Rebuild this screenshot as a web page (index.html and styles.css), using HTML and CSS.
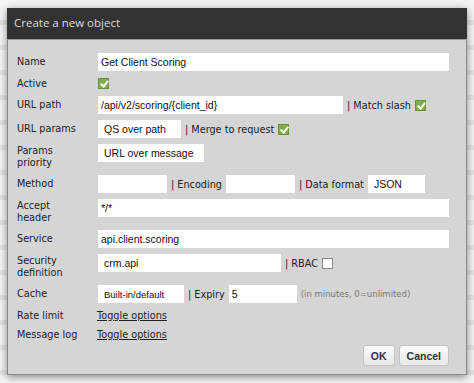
FILE: index.html
```html
<!DOCTYPE html>
<html lang="en">
<head>
    <meta charset="UTF-8">
    <title>Create a new object</title>
    <link rel="stylesheet" href="styles.css">
</head>
<body>
    <div class="dialog">
        <div class="titlebar">Create a new object</div>
        <div class="dialog-body">
            <div class="row">
                <div class="label">Name</div>
                <div class="field"><input class="txt w-full" type="text" value="Get Client Scoring"></div>
            </div>
            <div class="row row-short">
                <div class="label">Active</div>
                <div class="field"><span class="cb checked"></span></div>
            </div>
            <div class="row">
                <div class="label">URL path</div>
                <div class="field">
                    <input class="txt w-path" type="text" value="/api/v2/scoring/{client_id}">
                    <span class="sep">| Match slash</span><span class="cb checked"></span>
                </div>
            </div>
            <div class="row">
                <div class="label">URL params</div>
                <div class="field">
                    <input class="txt w-qs pad5" type="text" value="QS over path">
                    <span class="sep">| Merge to request</span><span class="cb checked"></span>
                </div>
            </div>
            <div class="row">
                <div class="label two">Params<br>priority</div>
                <div class="field"><input class="txt w-prio pad5" type="text" value="URL over message"></div>
            </div>
            <div class="row">
                <div class="label">Method</div>
                <div class="field">
                    <input class="txt w-method" type="text" value="">
                    <span class="sep">| Encoding</span>
                    <input class="txt w-method" type="text" value="">
                    <span class="sep">| Data format</span>
                    <input class="txt w-format pad5" type="text" value="JSON">
                </div>
            </div>
            <div class="row">
                <div class="label two">Accept<br>header</div>
                <div class="field"><input class="txt w-full" type="text" value="*/*"></div>
            </div>
            <div class="row">
                <div class="label">Service</div>
                <div class="field"><input class="txt w-full" type="text" value="api.client.scoring"></div>
            </div>
            <div class="row">
                <div class="label two">Security<br>definition</div>
                <div class="field">
                    <input class="txt w-sec pad5" type="text" value="crm.api">
                    <span class="sep">| RBAC</span><span class="cb"></span>
                </div>
            </div>
            <div class="row">
                <div class="label">Cache</div>
                <div class="field">
                    <input class="txt w-cache pad5 small" type="text" value="Built-in/default">
                    <span class="sep">| Expiry</span>
                    <input class="txt w-expiry" type="text" value="5">
                    <span class="hint">(in minutes, 0=unlimited)</span>
                </div>
            </div>
            <div class="row row-short">
                <div class="label">Rate limit</div>
                <div class="field"><a class="toggle" href="#">Toggle options</a></div>
            </div>
            <div class="row row-short">
                <div class="label">Message log</div>
                <div class="field"><a class="toggle" href="#">Toggle options</a></div>
            </div>
            <div class="actions">
                <button class="btn">OK</button>
                <button class="btn">Cancel</button>
            </div>
        </div>
    </div>
</body>
</html>
```

FILE: styles.css
```css
* {
    margin: 0;
    padding: 0;
    box-sizing: border-box;
}
body {
    font-family: "DejaVu Sans", Verdana, sans-serif;
    font-size: 9.7px;
    color: #222;
    background: repeating-linear-gradient(to bottom, #f4f4f4 0, #f4f4f4 20px, #e4e4e4 20px, #e4e4e4 25px);
    padding: 8px 7px;
}
.dialog {
    width: 460px;
    background: #d5d5d5;
    border: 1px solid #8a8a8a;
    border-top: none;
    box-shadow: 0 2px 8px rgba(0,0,0,0.45);
}
.titlebar {
    background: #323232;
    color: #dcdcdc;
    font-family: "Open Sans", sans-serif;
    font-size: 11.5px;
    height: 32px;
    line-height: 30px;
    padding-left: 7px;
    margin: 0 -1px;
    border-bottom: 1px solid #9a9a9a;
}
.dialog-body {
    padding: 13px 17px 8px 9px;
}
.row {
    display: flex;
    align-items: flex-start;
    margin-bottom: 6px;
    min-height: 18px;
}
.row-short {
    min-height: 13px;
    align-items: center;
}
.label {
    width: 81px;
    flex-shrink: 0;
    line-height: 18px;
}
.label.two {
    line-height: 12px;
    padding-top: 1px;
}
.row-short .label {
    line-height: 13px;
}
.field {
    display: flex;
    align-items: center;
    min-height: 18px;
}
.row-short .field {
    min-height: 13px;
}
.txt {
    height: 18px;
    border: none;
    background: #fff;
    font-family: "Liberation Sans", Arial, sans-serif;
    font-size: 10.5px;
    color: #111;
    padding: 0 3px;
    outline: none;
}
.pad5 {
    padding-left: 6px;
}
.small {
    font-size: 9.5px;
}
.w-full { width: 351px; }
.w-path { width: 245px; }
.w-qs { width: 83px; }
.w-prio { width: 106px; }
.w-method { width: 69px; }
.w-format { width: 57px; }
.w-sec { width: 183px; }
.w-cache { width: 86px; }
.w-expiry { width: 68px; }
.sep {
    margin: 0 4px;
    white-space: nowrap;
}
.sep-tight {
    margin-right: 2px;
}
.hint {
    font-size: 8.5px;
    color: #777;
    margin-left: 4px;
}
.cb {
    display: inline-block;
    width: 11px;
    height: 11px;
    background: #fff;
    border: 1px solid #8a8a8a;
    position: relative;
}
.cb.checked {
    background: #84ad4c;
    border-color: #6b9138;
}
.cb.checked::after {
    content: "";
    position: absolute;
    left: 3px;
    top: 0px;
    width: 3px;
    height: 6px;
    border: solid #fff;
    border-width: 0 2px 2px 0;
    transform: rotate(40deg);
}
.toggle {
    color: #222;
    text-decoration: underline;
    margin-left: -1px;
}
.actions {
    display: flex;
    justify-content: flex-end;
    gap: 4px;
    margin-top: -2px;
}
.btn {
    height: 21px;
    padding: 0 7px;
    font-family: "Liberation Sans", Arial, sans-serif;
    font-size: 10.5px;
    font-weight: bold;
    color: #333;
    background: linear-gradient(#fafafa, #e8e8e8);
    border: 1px solid #c4c4c4;
    border-radius: 3px;
}
```
